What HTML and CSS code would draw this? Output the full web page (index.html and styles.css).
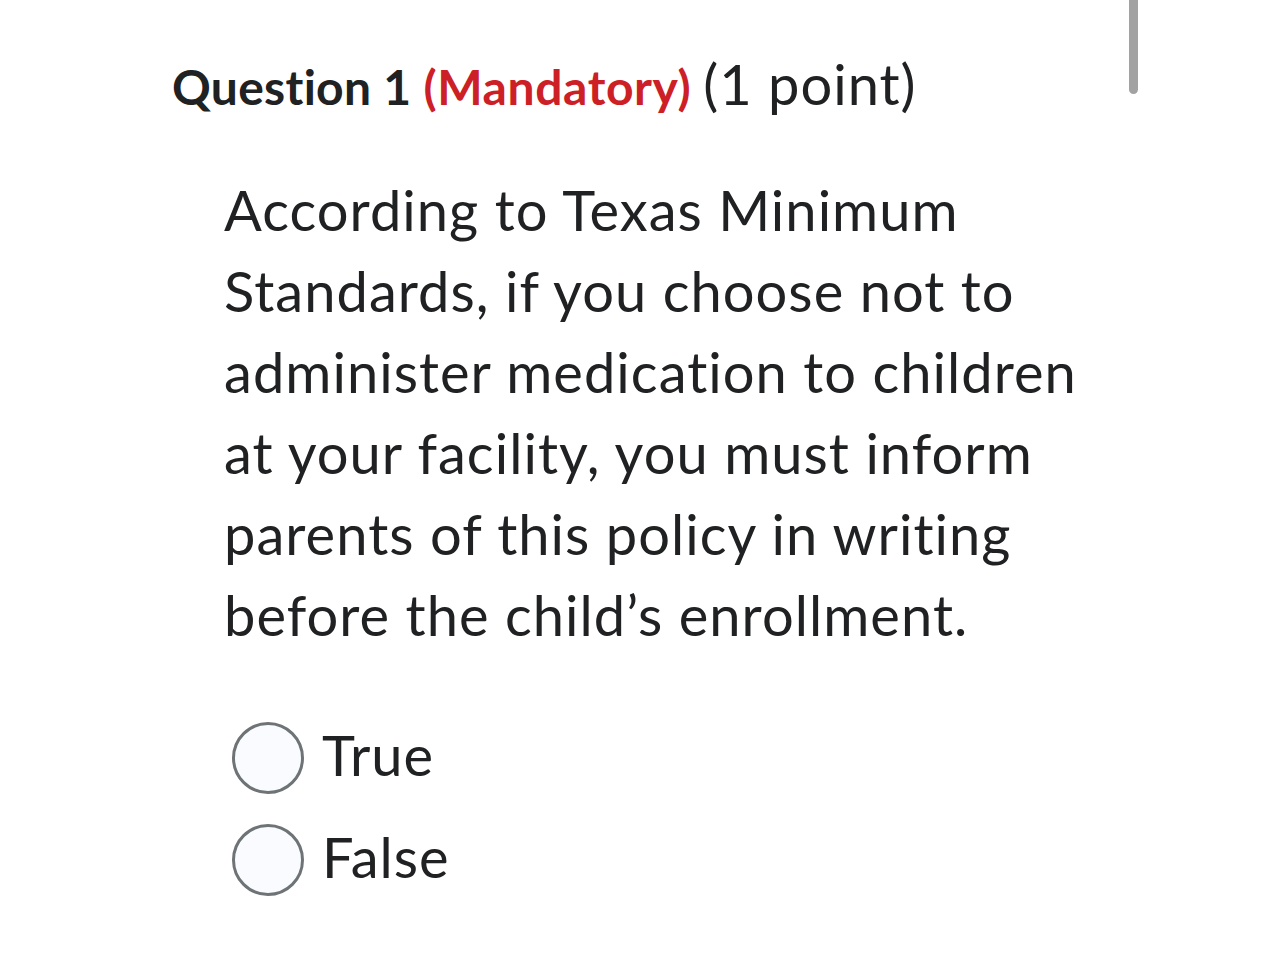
FILE: index.html
```html
<!DOCTYPE html>
<html lang="en">
<head>
<meta charset="utf-8">
<title>Question 1</title>
<link rel="stylesheet" href="styles.css">
</head>
<body>
<div class="scrollbar"></div>
<main class="question">
  <h2 class="q-title">Question 1 <span class="mandatory">(Mandatory)</span> <span class="points">(1 point)</span></h2>
  <div class="q-body">
    <p class="q-text">According to Texas Minimum Standards, if you choose not to administer medication to children at your facility, you must inform parents of this policy in writing before the child’s enrollment.</p>
    <div class="options">
      <label class="option"><span class="radio"></span><span class="opt-label">True</span></label>
      <label class="option"><span class="radio"></span><span class="opt-label">False</span></label>
    </div>
  </div>
</main>
</body>
</html>
```

FILE: styles.css
```css
html, body {
  margin: 0;
  padding: 0;
  background: #ffffff;
}
body {
  font-family: Lato, "Open Sans", sans-serif;
  color: #202122;
  width: 1282px;
  height: 980px;
  position: relative;
  overflow: hidden;
  font-variant-ligatures: none;
  font-feature-settings: "liga" 0, "clig" 0;
}
.scrollbar {
  position: absolute;
  left: 1129px;
  top: 0;
  width: 9px;
  height: 94px;
  background: #a2a2a2;
  border-radius: 0 0 5px 5px;
}
.question {
  padding: 52px 0 0 172px;
}
.q-title {
  margin: 0;
  font-size: 48px;
  font-weight: 700;
  line-height: 64px;
  white-space: nowrap;
  letter-spacing: 0.3px;
}
.mandatory {
  color: #cd2026;
  letter-spacing: 0.6px;
}
.points {
  font-weight: 400;
  font-size: 56px;
  letter-spacing: 1px;
}
.q-body {
  padding: 50px 0 0 52px;
  width: 900px;
}
.q-text {
  margin: 0;
  font-size: 56px;
  line-height: 81px;
  letter-spacing: 1.05px;
}
.options {
  display: flex;
  flex-direction: column;
  gap: 30px;
  margin-top: 67px;
}
.option {
  display: flex;
  align-items: center;
  gap: 18px;
  margin-left: 8px;
}
.radio {
  width: 66px;
  height: 66px;
  border: 3px solid #6e7376;
  border-radius: 50%;
  background: #f9fbff;
  flex: none;
}
.opt-label {
  font-size: 56px;
  line-height: 66px;
  padding-bottom: 6px;
  letter-spacing: 1px;
}
```
